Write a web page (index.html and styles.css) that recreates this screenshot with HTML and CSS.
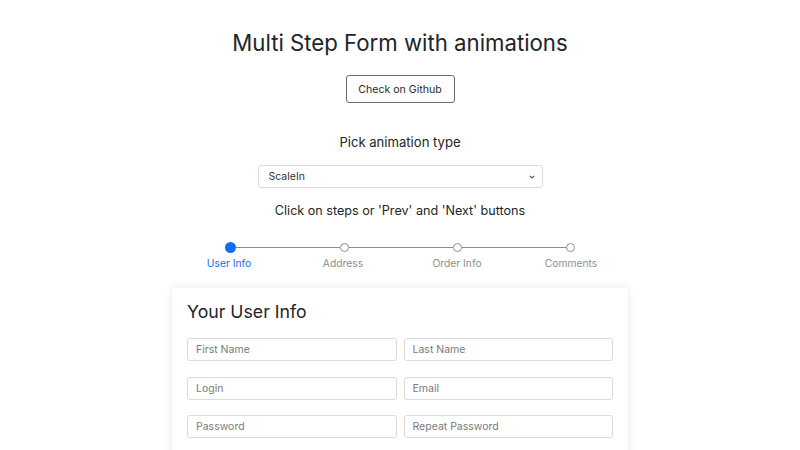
FILE: index.html
```html
<!DOCTYPE html>
<html lang="en">
<head>
<meta charset="utf-8">
<title>Multi Step Form with animations</title>
<link rel="stylesheet" href="styles.css">
</head>
<body>
<main class="page">
  <h1 class="title">Multi Step Form with animations</h1>
  <a class="gh-btn" href="#">Check on Github</a>
  <p class="label label-pick">Pick animation type</p>
  <select class="anim-select">
    <option>ScaleIn</option>
    <option>ScaleOut</option>
    <option>SlideHorz</option>
    <option>SlideVert</option>
    <option>FadeIn</option>
  </select>
  <p class="label label-click">Click on steps or 'Prev' and 'Next' buttons</p>

  <div class="stepper">
    <div class="track">
      <span class="dot active"></span>
      <span class="line"></span>
      <span class="dot"></span>
      <span class="line"></span>
      <span class="dot"></span>
      <span class="line"></span>
      <span class="dot"></span>
    </div>
    <div class="step-labels">
      <span class="step-label active">User Info</span>
      <span class="step-label">Address</span>
      <span class="step-label">Order Info</span>
      <span class="step-label">Comments</span>
    </div>
  </div>

  <form class="card">
    <h2 class="card-title">Your User Info</h2>
    <div class="fields">
      <input class="field" type="text" placeholder="First Name">
      <input class="field" type="text" placeholder="Last Name">
      <input class="field" type="text" placeholder="Login">
      <input class="field" type="email" placeholder="Email">
      <input class="field" type="password" placeholder="Password">
      <input class="field" type="password" placeholder="Repeat Password">
    </div>
  </form>
</main>
</body>
</html>
```

FILE: styles.css
```css
* { box-sizing: border-box; }

html, body {
  margin: 0;
  padding: 0;
  background: #ffffff;
}

body {
  font-family: Inter, "Noto Sans", "Liberation Sans", sans-serif;
  color: #212529;
}

.page {
  display: flex;
  flex-direction: column;
  align-items: center;
  padding-top: 29px;
}

.title {
  margin: 0;
  font-size: 22.2px;
  line-height: 28px;
  font-weight: 400;
  color: #212529;
}

.gh-btn {
  margin-top: 18px;
  width: 109px;
  height: 28px;
  display: flex;
  align-items: center;
  justify-content: center;
  border: 1px solid #6c6c6c;
  border-radius: 3px;
  font-size: 10.6px;
  color: #2a2a2a;
  text-decoration: none;
}

.label {
  margin: 29px 0 0;
  line-height: 20px;
  color: #212529;
}

.label-pick {
  font-size: 13.1px;
}

.anim-select {
  margin-top: 13px;
  width: 285px;
  height: 23px;
  padding: 0 24px 0 10px;
  border: 1px solid #dcdcdc;
  border-radius: 3px;
  background: #fff url("data:image/svg+xml,%3Csvg xmlns='http://www.w3.org/2000/svg' width='6' height='4' viewBox='0 0 6 4'%3E%3Cpath d='M0.8 0.8l2.2 2.2 2.2-2.2' fill='none' stroke='%23555' stroke-width='1.1'/%3E%3C/svg%3E") no-repeat right 7px center;
  font-family: inherit;
  font-size: 10.5px;
  color: #333;
  -webkit-appearance: none;
  appearance: none;
  outline: none;
}

.label-click {
  margin-top: 13px;
  font-size: 12.6px;
}

.stepper {
  margin-top: 20px;
  width: 456px;
}

.track {
  display: flex;
  align-items: center;
  height: 12px;
  padding: 0 53px;
}

.dot {
  flex: none;
  width: 9px;
  height: 9px;
  border-radius: 50%;
  border: 1.5px solid #8e8e8e;
  background: #fff;
}

.dot.active {
  width: 11px;
  height: 11px;
  border: none;
  background: #0d6efd;
}

.line {
  flex: 1;
  height: 1px;
  background: #8e8e8e;
}

.step-labels {
  display: grid;
  grid-template-columns: repeat(4, 1fr);
  margin-top: 2px;
}

.step-label {
  text-align: center;
  font-size: 10.3px;
  line-height: 16px;
  color: #8f8f8f;
}

.step-label.active {
  color: #0d6efd;
}

.card {
  margin-top: 17px;
  width: 456px;
  padding: 10px 15px 20px;
  background: #fff;
  box-shadow: 0 0 10px rgba(0, 0, 0, 0.09);
  border-radius: 3px;
}

.card-title {
  margin: 0;
  font-size: 17.7px;
  line-height: 27px;
  font-weight: 400;
  color: #212529;
}

.fields {
  margin-top: 13px;
  display: grid;
  grid-template-columns: 1fr 1fr;
  column-gap: 7px;
  row-gap: 15.5px;
}

.field {
  display: block;
  width: 100%;
  height: 23px;
  padding: 0 8px;
  border: 1px solid #dadada;
  border-radius: 3px;
  font-family: inherit;
  font-size: 10.5px;
  color: #333;
  outline: none;
}

.field::placeholder {
  color: #7a7a7a;
}
```
